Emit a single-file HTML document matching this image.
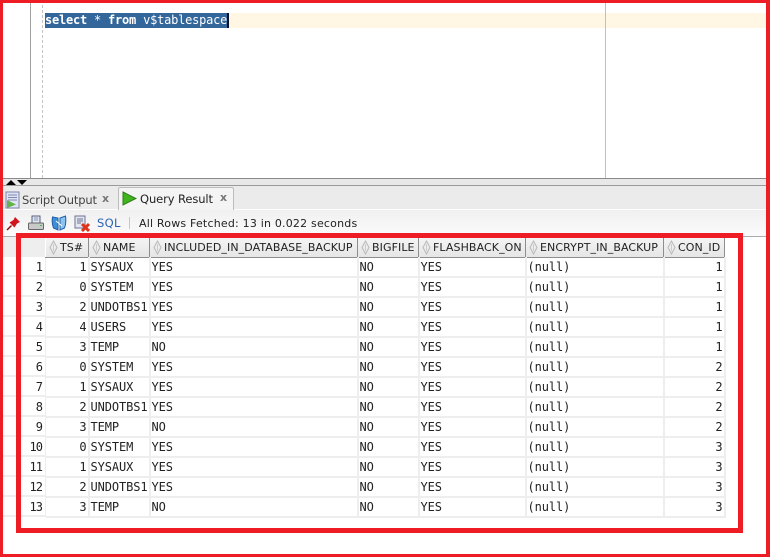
<!DOCTYPE html>
<html><head><meta charset="utf-8"><style>
html,body{margin:0;padding:0;background:#fff}
#p{position:relative;width:770px;height:557px;overflow:hidden;background:#fff;font-family:"DejaVu Sans",sans-serif;color:#222}
.a{position:absolute}
table{position:absolute;left:45px;top:238px;border-collapse:collapse;table-layout:fixed;width:679px}
td,th{padding:0;overflow:hidden;white-space:nowrap;box-sizing:border-box}
th{height:19px;background:linear-gradient(#f4f4f4,#e6e6e6);border-right:1px solid #8e8e8e;border-bottom:1px solid #8e8e8e;border-left:1px solid #fff;font:11px "DejaVu Sans",sans-serif;letter-spacing:.09px;text-align:left;color:#222;position:relative;padding-left:14px}
th svg{position:absolute;left:3px;top:2px}
td{height:20px;border-right:2px solid #eee;border-bottom:2px solid #eee;font:12px "DejaVu Sans Mono",monospace;color:#222;padding-left:1px;letter-spacing:-.1px}
td.n{text-align:right;padding-right:1px}
.rn{position:absolute;left:3px;width:42px;height:18px;border-bottom:2px solid #eee;border-right:1px solid #eee;font:12px/20px "DejaVu Sans Mono",monospace;text-align:right;color:#222;letter-spacing:-1px}
.rn span{position:absolute;right:3px}
</style></head><body><div id="p">
<div class="a" style="left:30px;top:0;width:1px;height:178px;background:#a0a0a0"></div>
<div class="a" style="left:42px;top:0;width:0;height:178px;border-left:1px dashed #c4c4c4"></div>
<div class="a" style="left:229px;top:13px;width:538px;height:15px;background:#fff7e4"></div>
<div class="a" style="left:605px;top:0;width:1px;height:178px;background:#c0c0c0"></div>
<div class="a" style="left:45px;top:13px;width:182px;height:15px;background:#33669a;color:#fff;font:12px/15px 'DejaVu Sans Mono',monospace;letter-spacing:-.22px;white-space:pre;overflow:hidden"><b>select</b> * <b>from</b> v$tablespace</div>
<div class="a" style="left:227px;top:13px;width:2px;height:15px;background:#0a1030"></div>

<div class="a" style="left:0;top:178px;width:770px;height:1px;background:#8a8a8a"></div>
<div class="a" style="left:0;top:179px;width:770px;height:6px;background:#e8e8e8"></div>
<div class="a" style="left:0;top:185px;width:770px;height:1px;background:#9a9a9a"></div>
<svg class="a" style="left:3px;top:179px" width="24" height="7"><path d="M3 6L8 1L13 6Z M14 1H24L19 6Z" fill="#000"/></svg>
<div class="a" style="left:0;top:186px;width:770px;height:23px;background:#ebebeb"></div>
<div class="a" style="left:0;top:209px;width:770px;height:1px;background:#fff"></div>
<div class="a" style="left:0;top:210px;width:770px;height:26px;background:linear-gradient(#f0f0f0,#fbfbfb)"></div>
<div class="a" style="left:0;top:236px;width:770px;height:1px;background:#aaa"></div>

<svg class="a" style="left:5px;top:191px" width="15" height="18"><rect x="1" y="1" width="13" height="16" fill="#dfe3f2" stroke="#7d85a8"/><path d="M3 4H12M3 6.500H12M3 9H12" stroke="#7f88b0"/><path d="M2 9L11 13.500L2 17Z" fill="#62b34a"/></svg>
<div class="a" style="left:22px;top:192px;font-size:11.500px;line-height:16px;color:#444;letter-spacing:-.16px">Script Output</div>
<div class="a" style="left:102px;top:191px;font:bold 11px/16px 'DejaVu Sans',sans-serif;color:#777">x</div>
<div class="a" style="left:118px;top:187px;width:114px;height:22px;background:#f4f4f4;border:1px solid #bdbdbd;border-bottom:0;border-radius:2px 2px 0 0"></div>
<svg class="a" style="left:122px;top:191px" width="15" height="15"><path d="M1 1L14 7.500L1 14Z" fill="#3fb41f" stroke="#2b7a18"/></svg>
<div class="a" style="left:140px;top:191px;font-size:11.500px;line-height:16px;color:#222;letter-spacing:-.1px">Query Result</div>
<div class="a" style="left:220px;top:190px;font:bold 11px/16px 'DejaVu Sans',sans-serif;color:#777">x</div>

<svg class="a" style="left:6px;top:216px" width="15" height="15"><path d="M9 1L14 6L11 7.500L8.500 11.500L3.500 6.500L7.500 4Z" fill="#d2141c"/><path d="M5.500 9.500L1 14" stroke="#8a1010" stroke-width="1.500"/></svg>
<svg class="a" style="left:27px;top:215px" width="18" height="16"><path d="M5 1H13V8H5Z" fill="#dfe6f5" stroke="#55607a"/><path d="M7 3H11M7 5H11" stroke="#8a94b0"/><rect x="1.500" y="8" width="15" height="6.500" rx="1" fill="#c9c9c9" stroke="#666"/><rect x="13" y="10" width="2" height="1" fill="#3c3"/></svg>
<svg class="a" style="left:51px;top:215px" width="16" height="16"><path d="M1.500 2Q0.500 8 2.500 13L7 15V3Z" fill="#3d8fd6" stroke="#1f5ea8"/><path d="M14.500 1Q15.500 8 13.500 13L9 15V3Z" fill="#8cc4ee" stroke="#1f5ea8"/><path d="M5 6L11 11" stroke="#fff"/></svg>
<svg class="a" style="left:74px;top:215px" width="17" height="17"><rect x="1" y="1" width="10" height="12" fill="#e4e7f2" stroke="#6b7390"/><path d="M3 4H9M3 6H9M3 8H7" stroke="#6b7390"/><path d="M8 9L15 16M15 9L8 16" stroke="#e0341a" stroke-width="3"/></svg>
<div class="a" style="left:97px;top:216px;font-size:11.500px;line-height:15px;color:#2a63b5;letter-spacing:.3px">SQL</div>
<div class="a" style="left:129px;top:217px;width:1px;height:12px;background:#c8c8c8"></div>
<div class="a" style="left:139px;top:216px;font-size:11px;line-height:15px;color:#222;letter-spacing:.2px;white-space:pre">All Rows Fetched: 13 in 0.022 seconds</div>

<div class="a" style="left:3px;top:237px;width:42px;height:20px;background:#eee"></div>
<div class="rn" style="top:257px"><span>1</span></div>
<div class="rn" style="top:277px"><span>2</span></div>
<div class="rn" style="top:297px"><span>3</span></div>
<div class="rn" style="top:317px"><span>4</span></div>
<div class="rn" style="top:337px"><span>5</span></div>
<div class="rn" style="top:357px"><span>6</span></div>
<div class="rn" style="top:377px"><span>7</span></div>
<div class="rn" style="top:397px"><span>8</span></div>
<div class="rn" style="top:417px"><span>9</span></div>
<div class="rn" style="top:437px"><span>10</span></div>
<div class="rn" style="top:457px"><span>11</span></div>
<div class="rn" style="top:477px"><span>12</span></div>
<div class="rn" style="top:497px"><span>13</span></div>

<table>
<colgroup><col style="width:43px"><col style="width:61px"><col style="width:208px"><col style="width:61px"><col style="width:107px"><col style="width:138px"><col style="width:61px"></colgroup>
<tr>
<th><svg width="9" height="15"><path d="M4.500 1L8 7.500L4.500 14L1 7.500Z" fill="none" stroke="#b8b8b8"/><path d="M4.500 4V11" stroke="#ccc"/></svg>TS#</th>
<th><svg width="9" height="15"><path d="M4.500 1L8 7.500L4.500 14L1 7.500Z" fill="none" stroke="#b8b8b8"/><path d="M4.500 4V11" stroke="#ccc"/></svg>NAME</th>
<th><svg width="9" height="15"><path d="M4.500 1L8 7.500L4.500 14L1 7.500Z" fill="none" stroke="#b8b8b8"/><path d="M4.500 4V11" stroke="#ccc"/></svg>INCLUDED_IN_DATABASE_BACKUP</th>
<th><svg width="9" height="15"><path d="M4.500 1L8 7.500L4.500 14L1 7.500Z" fill="none" stroke="#b8b8b8"/><path d="M4.500 4V11" stroke="#ccc"/></svg>BIGFILE</th>
<th><svg width="9" height="15"><path d="M4.500 1L8 7.500L4.500 14L1 7.500Z" fill="none" stroke="#b8b8b8"/><path d="M4.500 4V11" stroke="#ccc"/></svg>FLASHBACK_ON</th>
<th><svg width="9" height="15"><path d="M4.500 1L8 7.500L4.500 14L1 7.500Z" fill="none" stroke="#b8b8b8"/><path d="M4.500 4V11" stroke="#ccc"/></svg>ENCRYPT_IN_BACKUP</th>
<th><svg width="9" height="15"><path d="M4.500 1L8 7.500L4.500 14L1 7.500Z" fill="none" stroke="#b8b8b8"/><path d="M4.500 4V11" stroke="#ccc"/></svg>CON_ID</th>
</tr>
<tr><td class="n">1</td><td>SYSAUX</td><td>YES</td><td>NO</td><td>YES</td><td>(null)</td><td class="n">1</td></tr>
<tr><td class="n">0</td><td>SYSTEM</td><td>YES</td><td>NO</td><td>YES</td><td>(null)</td><td class="n">1</td></tr>
<tr><td class="n">2</td><td>UNDOTBS1</td><td>YES</td><td>NO</td><td>YES</td><td>(null)</td><td class="n">1</td></tr>
<tr><td class="n">4</td><td>USERS</td><td>YES</td><td>NO</td><td>YES</td><td>(null)</td><td class="n">1</td></tr>
<tr><td class="n">3</td><td>TEMP</td><td>NO</td><td>NO</td><td>YES</td><td>(null)</td><td class="n">1</td></tr>
<tr><td class="n">0</td><td>SYSTEM</td><td>YES</td><td>NO</td><td>YES</td><td>(null)</td><td class="n">2</td></tr>
<tr><td class="n">1</td><td>SYSAUX</td><td>YES</td><td>NO</td><td>YES</td><td>(null)</td><td class="n">2</td></tr>
<tr><td class="n">2</td><td>UNDOTBS1</td><td>YES</td><td>NO</td><td>YES</td><td>(null)</td><td class="n">2</td></tr>
<tr><td class="n">3</td><td>TEMP</td><td>NO</td><td>NO</td><td>YES</td><td>(null)</td><td class="n">2</td></tr>
<tr><td class="n">0</td><td>SYSTEM</td><td>YES</td><td>NO</td><td>YES</td><td>(null)</td><td class="n">3</td></tr>
<tr><td class="n">1</td><td>SYSAUX</td><td>YES</td><td>NO</td><td>YES</td><td>(null)</td><td class="n">3</td></tr>
<tr><td class="n">2</td><td>UNDOTBS1</td><td>YES</td><td>NO</td><td>YES</td><td>(null)</td><td class="n">3</td></tr>
<tr><td class="n">3</td><td>TEMP</td><td>NO</td><td>NO</td><td>YES</td><td>(null)</td><td class="n">3</td></tr>
</table>

<div class="a" style="left:16px;top:233px;width:727px;height:300px;box-sizing:border-box;border:5px solid #ee1c25"></div>
<div class="a" style="left:0;top:0;width:770px;height:557px;box-sizing:border-box;border:solid #ee1c25;border-width:3px 4px 3px 3px"></div>
</div></body></html>
